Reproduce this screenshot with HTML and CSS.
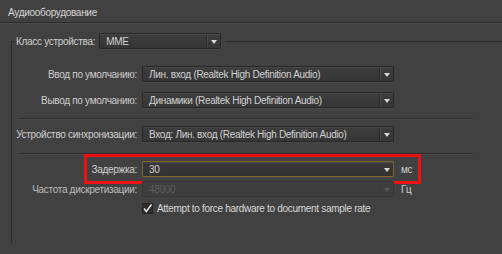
FILE: index.html
```html
<!DOCTYPE html>
<html lang="ru">
<head>
<meta charset="utf-8">
<link rel="stylesheet" href="styles.css">
</head>
<body>
<div class="panel">
  <div class="header">Аудиооборудование</div>
  <fieldset class="group">
    <legend class="legend">
      <span class="lbl">Класс устройства:</span>
      <div class="combo combo-class"><span class="val">MME</span><span class="arrow"></span></div>
    </legend>
    <div class="rows">
      <div class="row">
        <span class="lbl">Ввод по умолчанию:</span>
        <div class="combo"><span class="val">Лин. вход (Realtek High Definition Audio)</span><span class="arrow"></span></div>
      </div>
      <div class="row">
        <span class="lbl">Вывод по умолчанию:</span>
        <div class="combo"><span class="val">Динамики (Realtek High Definition Audio)</span><span class="arrow"></span></div>
      </div>
      <div class="sep"></div>
      <div class="row">
        <span class="lbl">Устройство синхронизации:</span>
        <div class="combo"><span class="val">Вход: Лин. вход (Realtek High Definition Audio)</span><span class="arrow"></span></div>
      </div>
      <div class="sep sep2"></div>
      <div class="row row-latency">
        <span class="lbl">Задержка:</span>
        <div class="combo combo-focus"><span class="val">30</span><span class="arrow"></span></div>
        <span class="unit">мс</span>
        <div class="highlight"></div>
      </div>
      <div class="row row-rate">
        <span class="lbl">Частота дискретизации:</span>
        <div class="combo combo-disabled"><span class="val">48000</span><span class="arrow"></span></div>
        <span class="unit">Гц</span>
      </div>
      <div class="row row-check">
        <span></span>
        <label class="check">
          <span class="box"><svg width="11" height="11" viewBox="0 0 11 11"><path d="M2 5.5 L4.3 8.5 L9.5 1.5" fill="none" stroke="#e8e8e8" stroke-width="1.4"/></svg></span>
          <span class="check-text">Attempt to force hardware to document sample rate</span>
        </label>
      </div>
    </div>
  </fieldset>
</div>
</body>
</html>
```

FILE: styles.css
```css
html, body {
  margin: 0;
  padding: 0;
  background: #414141;
}
body {
  width: 502px;
  height: 254px;
  overflow: hidden;
  font-family: "Liberation Sans", Arial, sans-serif;
  font-size: 10px;
  letter-spacing: -0.3px;
  color: #cfcfcf;
}
.panel {
  display: flex;
  flex-direction: column;
}
.header {
  height: 22px;
  line-height: 25px;
  padding-left: 8px;
  color: #d6d6d6;
  border-bottom: 1px solid #2c2c2c;
  box-shadow: 0 1px 0 #4a4a4a;
}
.group {
  margin: 10px 0 0 11px;
  padding: 0;
  border: 0;
  border-top: 1px solid #2c2c2c;
  border-left: 1px solid #2c2c2c;
  min-width: 0;
  height: 211px;
  box-sizing: border-box;
}
.legend {
  display: flex;
  align-items: center;
  gap: 4px;
  padding: 0 4px 0 2px;
  margin-left: 2px;
}
.combo {
  position: relative;
  display: flex;
  align-items: center;
  box-sizing: border-box;
  height: 16px;
  width: 252px;
  background: linear-gradient(#3d3d3d, #363636);
  border: 1px solid #272727;
  border-radius: 1px;
  box-shadow: inset 0 1px 0 #484848, 0 1px 0 #494949;
  color: #d2d2d2;
}
.combo .val {
  flex: 1;
  padding-left: 6px;
  white-space: nowrap;
  overflow: hidden;
}
.combo .arrow {
  width: 13px;
  height: 12px;
  border-left: 1px solid #2a2a2a;
  box-shadow: inset 1px 0 0 #4a4a4a;
  display: flex;
  align-items: center;
  justify-content: center;
}
.combo .arrow::after {
  content: "";
  border-left: 3.5px solid transparent;
  border-right: 3.5px solid transparent;
  border-top: 4px solid #d8d8d8;
  margin-top: 1px;
}
.combo-class {
  width: 122px;
}
.combo-focus {
  border-color: #7d6628;
  background: linear-gradient(#383838, #333333);
}
.combo-focus .arrow {
  border-left-color: transparent;
  box-shadow: none;
}
.combo-disabled {
  background: #3e3e3e;
  border-color: #363636;
  box-shadow: none;
  color: #5c5c5c;
}
.combo-disabled .arrow {
  border-left-color: #383838;
  box-shadow: none;
}
.combo-disabled .arrow::after {
  border-top-color: #5a5a5a;
}
.rows {
  display: flex;
  flex-direction: column;
  padding-top: 17px;
}
.row {
  display: grid;
  grid-template-columns: 125px 252px auto;
  column-gap: 5px;
  align-items: center;
  height: 16px;
  margin-bottom: 10px;
  position: relative;
}
.row .lbl {
  text-align: right;
  white-space: nowrap;
}
.unit {
  padding-left: 2px;
}
.sep {
  margin: 0 29px 7px 6px;
  height: 1px;
  background: #2e2e2e;
  box-shadow: 0 1px 0 #484848;
}
.sep2 {
  margin-top: 1px;
}
.row-latency {
  margin-top: 0;
  margin-bottom: 4px;
}
.highlight {
  position: absolute;
  left: 72px;
  top: -7px;
  width: 331px;
  height: 24px;
  border: 3px solid #ee1111;
  pointer-events: none;
}
.row-rate {
  margin-bottom: 5px;
}
.row-rate .lbl {
  color: #bdbdbd;
}
.row-check {
  height: 12px;
}
.check {
  display: flex;
  align-items: center;
  gap: 4px;
  white-space: nowrap;
}
.box {
  width: 11px;
  height: 11px;
  box-sizing: border-box;
  background: #2e2e2e;
  border: 1px solid #262626;
  display: flex;
}
.box svg {
  margin: -1px;
}
.check-text {
  color: #d8d8d8;
}
```
